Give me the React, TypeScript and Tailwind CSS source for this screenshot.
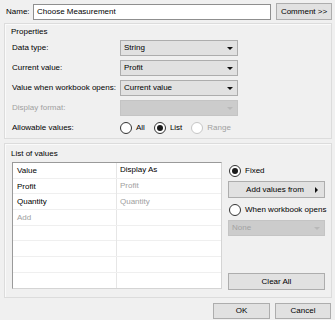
const FONT = "font-['Liberation_Sans',Arial,sans-serif]";

function Arrow({ dim = false }: { dim?: boolean }) {
  return (
    <svg width="6" height="3" viewBox="0 0 6 3" className="shrink-0">
      <path d="M0 0 H6 L3 3 Z" fill={dim ? "#b8b8b8" : "#111"} />
    </svg>
  );
}

function Select({ value, disabled = false, w = "w-[118px]" }: { value?: string; disabled?: boolean; w?: string }) {
  return (
    <div
      className={`flex h-[16px] ${w} items-center justify-between border pl-[3px] pr-[4px] ${
        disabled ? "border-[#c4c4c4] bg-[#cccccc] text-[#a2a2a2]" : "border-[#adadad] bg-[#e1e1e1] text-black"
      }`}
    >
      <span className="leading-none">{value}</span>
      <Arrow dim={disabled} />
    </div>
  );
}

function Radio({ label, checked = false, disabled = false }: { label: string; checked?: boolean; disabled?: boolean }) {
  return (
    <div className="flex items-center gap-[4px] whitespace-nowrap">
      <span
        className={`flex h-[12px] w-[12px] shrink-0 items-center justify-center rounded-full border bg-white ${
          disabled ? "border-[#c6c6c6]" : "border-[#333333]"
        }`}
      >
        {checked && <span className="h-[6px] w-[6px] rounded-full bg-[#1a1a1a]" />}
      </span>
      <span className={disabled ? "text-[#a0a0a0]" : "text-black"}>{label}</span>
    </div>
  );
}

function Button({ children, className = "" }: { children: React.ReactNode; className?: string }) {
  return (
    <div className={`flex items-center justify-center whitespace-nowrap border border-[#adadad] bg-[#e1e1e1] text-black ${className}`}>
      {children}
    </div>
  );
}

const PROPS = [
  { label: "Data type:", value: "String" },
  { label: "Current value:", value: "Profit" },
  { label: "Value when workbook opens:", value: "Current value" },
  { label: "Display format:", value: "", disabled: true },
];

const ROWS: [string, string, boolean][] = [
  ["Value", "Display As", false],
  ["Profit", "Profit", true],
  ["Quantity", "Quantity", true],
  ["Add", "", false],
  ["", "", false],
  ["", "", false],
  ["", "", false],
  ["", "", false],
];

export default function App() {
  return (
    <div className={`${FONT} h-[320px] w-[335px] overflow-hidden whitespace-nowrap bg-[#f0f0f0] text-[8px] text-black`}>
      {/* Name row */}
      <div className="flex h-[22px] items-center pl-[6px] pt-[1px]">
        <span className="w-[27px]">Name:</span>
        <div className="flex h-[16px] w-[238px] items-center border border-[#8f8f8f] bg-white pl-[3px]">
          Choose Measurement
        </div>
        <Button className="ml-[5px] h-[17px] w-[56px]">Comment &gt;&gt;</Button>
      </div>

      {/* Properties */}
      <div className="ml-[4px] mt-[1px] h-[116px] w-[328px] border border-[#dcdcdc] shadow-[inset_1px_1px_0_#fafafa]">
        <div className="flex h-[14px] items-center pl-[6px] pt-[2px]">Properties</div>
        {PROPS.map((p) => (
          <div key={p.label} className="flex h-[20px] items-center pl-[7px]">
            <span className={`w-[108px] ${p.disabled ? "text-[#a0a0a0]" : ""}`}>{p.label}</span>
            <Select value={p.value} disabled={p.disabled} />
          </div>
        ))}
        <div className="flex h-[19px] items-center pl-[7px]">
          <span className="w-[108px]">Allowable values:</span>
          <div className="flex items-center gap-[9px]">
            <Radio label="All" />
            <Radio label="List" checked />
            <Radio label="Range" disabled />
          </div>
        </div>
      </div>

      {/* List of values */}
      <div className="ml-[4px] mt-[4px] h-[155px] w-[328px] border border-[#dcdcdc] shadow-[inset_1px_1px_0_#fafafa]">
        <div className="flex h-[18px] items-center pl-[6px] pt-[2px]">List of values</div>
        <div className="flex gap-[6px] pl-[7px]">
          <div className="h-[127px] w-[210px] overflow-hidden border border-l-[#9a9a9a] border-t-[#9a9a9a] border-r-[#d4d4d4] border-b-[#d4d4d4] bg-white">
            {ROWS.map(([v, d, main], i) => (
              <div key={i} className="flex h-[15.7px] items-center border-b border-[#efefef]">
                <span className={`w-[104px] border-r border-[#e6e6e6] pl-[4px] leading-[15px] ${v === "Add" ? "text-[#a0a0a0]" : ""}`}>
                  {v || "\u00a0"}
                </span>
                <span className={`pl-[3px] ${main ? "text-[#a0a0a0]" : ""}`}>{d}</span>
              </div>
            ))}
          </div>
          <div className="flex w-[97px] flex-col pt-[1px]">
            <div className="flex h-[16px] items-center pl-[1px]">
              <Radio label="Fixed" checked />
            </div>
            <Button className="mt-[2px] h-[17px] w-[97px] pl-[6px]">
              <span className="flex-1 text-center">Add values from</span>
              <svg width="3" height="6" viewBox="0 0 3 6" className="mr-[6px]">
                <path d="M0 0 L3 3 L0 6 Z" fill="#111" />
              </svg>
            </Button>
            <div className="mt-[4px] flex h-[16px] items-center pl-[1px]">
              <Radio label="When workbook opens" />
            </div>
            <div className="mt-[2px]">
              <Select value="None" disabled w="w-[97px]" />
            </div>
            <Button className="mt-[37px] h-[17px] w-[97px]">Clear All</Button>
          </div>
        </div>
      </div>

      {/* Footer */}
      <div className="mt-[5px] flex justify-end gap-[5px] pr-[4px]">
        <Button className="h-[16px] w-[57px]">OK</Button>
        <Button className="h-[16px] w-[56px]">Cancel</Button>
      </div>
    </div>
  );
}
